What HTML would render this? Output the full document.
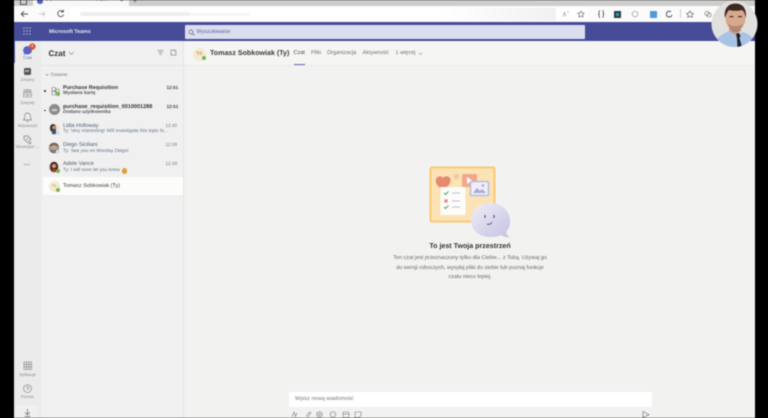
<!DOCTYPE html>
<html lang="pl">
<head>
<meta charset="utf-8">
<title>Microsoft Teams</title>
<style>
html,body{margin:0;padding:0;width:768px;height:418px;overflow:hidden;background:#000}
body{font-family:"Liberation Sans",sans-serif;position:relative;text-rendering:geometricPrecision}
#w{position:absolute;left:0;top:0;width:768px;height:418px;overflow:hidden;filter:blur(.5px)}
.a{position:absolute;white-space:nowrap}
.t{position:absolute;white-space:nowrap;line-height:1;margin-top:1.2px}
.rl{position:absolute;left:12px;width:31px;text-align:center;font-size:4.2px;color:#8a8a8a;line-height:1;margin-top:.7px}
.nm{font-size:5.5px;color:#3d3d3d}
.pv{font-size:4.8px;color:#6f6f6f}
.tm{font-size:4.6px;color:#777}
.tab{font-size:5.5px;color:#6e6e6e;top:50px}
</style>
</head>
<body>
<div id="w">
<!-- window -->
<div class="a" style="left:14px;top:0;width:741px;height:418px;background:#f2f2f0"></div>
<!-- tab bar -->
<div class="a" style="left:14px;top:0;width:741px;height:6px;background:#cdcdcb"></div>
<div class="a" style="left:33px;top:0;width:96px;height:6px;background:#f7f7f7"></div>
<div class="t" style="left:46px;top:-3px;font-size:4.8px;color:#555">(2) Tomasz Sobkowiak (Ty) | Mic...</div>
<div class="t" style="left:120px;top:-3px;font-size:6px;color:#444">×</div>
<div class="t" style="left:133px;top:-3px;font-size:7px;color:#555">+</div>
<div class="a" style="left:37px;top:-1px;width:6px;height:5px;border-radius:3px;background:#5a5fc0"></div>
<div class="a" style="left:20px;top:-1px;width:5px;height:4px;border:1px solid #555"></div>
<!-- address bar -->
<div class="a" style="left:14px;top:6px;width:741px;height:16px;background:#fbfbfb"></div>
<div class="a" style="left:70px;top:7.5px;width:518px;height:13px;background:#fff"></div>
<div class="a" style="left:440px;top:7.5px;width:116px;height:13px;background:linear-gradient(90deg,#fff,#f1f1f1)"></div>
<div class="a" style="left:80px;top:12px;width:110px;height:4px;background:#eeeeee;border-radius:2px"></div>
<div class="a" style="left:190px;top:12.5px;width:60px;height:3px;background:#f5f5f5;border-radius:2px"></div>
<svg class="a" style="left:14px;top:6px" width="741" height="16" viewBox="14 6 741 16" fill="none" stroke="#555" stroke-width=".9">
<path d="M21 14h7M21 14l3-2.6M21 14l3 2.6"/>
<path d="M39 14h6M45 14l-2.6-2.4M45 14l-2.6 2.4" stroke="#ccc"/>
<path d="M63 11.6a3 3 0 1 0 .6 3M63.3 9.8v2.2h-2.2"/>
<path d="M563 16.500l1.500-4 1.500 4M568 11v2" stroke="#888" stroke-width=".6"/>
<path d="M581 11l1.200 2 2 .3-1.500 1.500.4 2.200-2.100-1-2.100 1 .4-2.200-1.500-1.500 2-.3z" stroke="#777" stroke-width=".7"/>
<path d="M600 10.500c-1.200 0-.8 1.600-.9 2.600 0 .6-.5.9-.9.9.4 0 .9.3.9.9.1 1-.3 2.600.9 2.600M602.400 10.500c1.200 0 .8 1.600.9 2.600 0 .6.5.9.9.9-.4 0-.9.3-.9.9-.1 1 .3 2.600-.9 2.600" stroke="#333" stroke-width=".7"/>
<circle cx="635" cy="14" r="2.800" stroke="#999" stroke-width=".7"/>
<path d="M671 11.800a2.900 2.900 0 1 0 1 3.200" stroke="#555" stroke-width="1"/>
<path d="M690 11l1.200 2.100 2.200.4-1.600 1.600.4 2.200-2.200-1-2.200 1 .4-2.200-1.600-1.600 2.200-.4z" stroke="#666" stroke-width=".7"/>
<circle cx="707" cy="13.500" r="2.200" stroke="#777" stroke-width=".7"/><circle cx="709" cy="15" r="2.200" stroke="#777" stroke-width=".7"/>
</svg>
<div class="a" style="left:614px;top:11px;width:7px;height:7px;background:#263f4c"></div>
<div class="a" style="left:616px;top:13px;width:3px;height:3px;background:#3a93b5"></div>
<div class="a" style="left:650px;top:11px;width:7px;height:7px;background:#4d9bd6"></div>
<div class="a" style="left:680px;top:9px;width:.7px;height:9px;background:#ccc"></div>
<!-- teams header -->
<div class="a" style="left:14px;top:22px;width:741px;height:19px;background:#464c97"></div>
<svg class="a" style="left:23px;top:27px" width="9" height="9" fill="#aeb1d8"><circle cx="1" cy="1" r=".8"/><circle cx="4" cy="1" r=".8"/><circle cx="7" cy="1" r=".8"/><circle cx="1" cy="4" r=".8"/><circle cx="4" cy="4" r=".8"/><circle cx="7" cy="4" r=".8"/><circle cx="1" cy="7" r=".8"/><circle cx="4" cy="7" r=".8"/><circle cx="7" cy="7" r=".8"/></svg>
<div class="t" style="left:49px;top:28.800px;font-size:5.300px;font-weight:bold;color:#e6e7f4">Microsoft Teams</div>
<div class="a" style="left:185px;top:25px;width:400px;height:13.500px;background:#dcdeef;border-radius:1px"></div>
<svg class="a" style="left:188px;top:28.500px" width="7" height="7" fill="none" stroke="#5a5f90" stroke-width=".7"><circle cx="3" cy="3" r="2"/><path d="M4.500 4.500l2 2"/></svg>
<div class="t" style="left:196.500px;top:28.800px;font-size:5.400px;color:#5c5f95">Wyszukiwanie</div>
<!-- rail -->
<div class="a" style="left:14px;top:41px;width:27px;height:377px;background:#ebebeb"></div>
<div class="a" style="left:14px;top:41px;width:1px;height:22px;background:#5b5fb5"></div>
<svg class="a" style="left:22px;top:43px" width="16" height="14"><path d="M5.500 2a4 4 0 0 1 0 8c-.8 0-1.500-.2-2-.5L1.600 10.600l.5-2A4 4 0 0 1 5.500 2z" fill="#5c62c4" transform="translate(0 1) scale(1.050)"/><circle cx="10.400" cy="3.500" r="3.200" fill="#d5523a"/></svg>
<div class="t" style="left:31.200px;top:43.600px;font-size:3.600px;color:#fff;font-weight:bold">2</div>
<div class="rl" style="top:55.500px;color:#6064b8">Czat</div>
<div class="a" style="left:23.500px;top:68px;width:7px;height:7px;background:#555;border-radius:1.500px"></div>
<div class="a" style="left:25px;top:70px;width:4px;height:1.500px;background:#aaa"></div>
<div class="rl" style="top:77.500px">Zmiany</div>
<svg class="a" style="left:21.500px;top:89px" width="11" height="10" fill="none" stroke="#8a8a8a" stroke-width=".6"><circle cx="3" cy="2" r="1.200"/><circle cx="5.500" cy="1.600" r="1.200"/><circle cx="8" cy="2" r="1.200"/><path d="M1.500 4h8v4h-8zM5.500 4v4M1.500 6h8"/></svg>
<div class="rl" style="top:100px">Zespoły</div>
<svg class="a" style="left:22px;top:112px" width="11" height="11" fill="none" stroke="#808080" stroke-width=".65"><path d="M5.500 1a3 3 0 0 1 3 3v2.600l1 1.400h-8l1-1.400V4a3 3 0 0 1 3-3zM4.400 9.400h2.200"/></svg>
<div class="rl" style="top:123px">Aktywność</div>
<svg class="a" style="left:22px;top:134px" width="11" height="11" fill="none" stroke="#777" stroke-width=".65"><path d="M2 2h4l3 3-2 2 2 2-1.500 1L4 7 2 5zM4.500 5.500l1.500-1.500"/></svg>
<div class="rl" style="top:144.500px">Developer ...</div>
<div class="t" style="left:23.500px;top:158.500px;font-size:7px;color:#777;font-weight:bold;letter-spacing:.2px">...</div>
<svg class="a" style="left:22.500px;top:361px" width="10" height="10" fill="none" stroke="#777" stroke-width=".6"><path d="M1 1h7.500v7.500H1zM3.500 1v7.500M6 1v7.500M1 3.500h7.500M1 6h7.500"/></svg>
<div class="rl" style="top:372.500px">Aplikacje</div>
<svg class="a" style="left:22px;top:383px" width="11" height="11" fill="none" stroke="#777" stroke-width=".6"><circle cx="5.500" cy="5.500" r="4"/><path d="M4.200 4.400a1.300 1.300 0 1 1 1.600 1.300l-.3.3v1"/></svg>
<div class="rl" style="top:394.500px">Pomoc</div>
<div class="a" style="left:16px;top:405px;width:22px;height:13px;background:#f0f0f0;border-radius:2px 2px 0 0"></div>
<svg class="a" style="left:23px;top:409px" width="9" height="9" fill="none" stroke="#666" stroke-width=".7"><path d="M4.500 0v5.500M2 3.400l2.500 2.400L7 3.400M1.500 7.500h6"/></svg>
<!-- chat list -->
<div class="a" style="left:41px;top:41px;width:142px;height:377px;background:#f0f0f0"></div>
<div class="a" style="left:41px;top:65px;width:142px;height:.6px;background:#e6e6e6"></div>
<div class="a" style="left:183px;top:41px;width:.6px;height:377px;background:#e4e4e4"></div>
<div class="t" style="left:48.500px;top:48.500px;font-size:8px;font-weight:bold;color:#333">Czat</div>
<svg class="a" style="left:68px;top:51px" width="7" height="5" fill="none" stroke="#888" stroke-width=".7"><path d="M1 1l2.500 2.500L6 1"/></svg>
<svg class="a" style="left:157px;top:49px" width="7" height="7" fill="none" stroke="#888" stroke-width=".7"><path d="M.5 1.500h6M1.500 3.500h4M2.500 5.500h2"/></svg>
<svg class="a" style="left:170px;top:49px" width="7" height="7" fill="none" stroke="#888" stroke-width=".7"><path d="M5 1H1v5h5V2.500M4 3l2.200-2.200"/></svg>
<svg class="a" style="left:45px;top:73px" width="4" height="4" fill="none" stroke="#888" stroke-width=".6"><path d="M.5 1l1.500 1.500L3.500 1"/></svg>
<div class="t" style="left:50.500px;top:72.200px;font-size:4.600px;color:#777">Ostatnie</div>

<div class="a" style="left:44px;top:90px;width:1.500px;height:1.500px;background:#333;border-radius:50%"></div>
<svg class="a" style="left:50.500px;top:86px" width="11" height="10" fill="none" stroke="#777" stroke-width=".6"><path d="M1 1.500h3.500V5H1zM1 5.500h3.500V9H1zM5 3h3v3H5z"/></svg>
<div class="a" style="left:56px;top:92px;width:4px;height:4px;background:#74b64d;border-radius:50%"></div>
<div class="t nm" style="left:63px;top:84.800px;font-size:5.400px;font-weight:bold;color:#333">Purchase Requisition</div>
<div class="t pv" style="left:63px;top:91px;font-weight:bold;color:#555">Wysłano kartę</div>
<div class="t tm" style="left:166.500px;top:85.200px;font-weight:bold;color:#444">12:51</div>

<div class="a" style="left:44px;top:109.500px;width:1.500px;height:1.500px;background:#333;border-radius:50%"></div>
<div class="a" style="left:49px;top:104px;width:11px;height:11px;background:#8d8d8d;border-radius:50%"></div>
<div class="a" style="left:52px;top:108.500px;width:5px;height:2px;background:#d0d0d0"></div>
<div class="t nm" style="left:63px;top:103.800px;font-weight:bold;color:#333">purchase_requisition_0010001288</div>
<div class="t pv" style="left:63px;top:110.200px;font-weight:bold;font-style:italic;color:#555">Dodano użytkownika</div>
<div class="t tm" style="left:166.500px;top:104.200px;font-weight:bold;color:#444">12:51</div>

<svg class="a" style="left:48px;top:123px" width="13" height="13"><defs><clipPath id="c1"><circle cx="6" cy="6" r="5.300"/></clipPath></defs><g clip-path="url(#c1)"><rect width="13" height="13" fill="#e6e2dc"/><ellipse cx="5" cy="5" rx="3" ry="4" fill="#3d3028"/><circle cx="6" cy="4.500" r="1.800" fill="#c9976f"/><rect x="4" y="7" width="4" height="5" fill="#34527c"/></g><circle cx="10" cy="10" r="2" fill="#d8d8d8" stroke="#f0f0f0" stroke-width=".5"/></svg>
<div class="t nm" style="left:63px;top:122.600px;color:#4b5b72">Lidia Holloway</div>
<div class="t pv" style="left:63px;top:129.200px;color:#66748a">Ty: Very interesting! Will investigate this topic fo...</div>
<div class="t tm" style="left:165.500px;top:123px">12:40</div>

<svg class="a" style="left:48px;top:142px" width="13" height="13"><defs><clipPath id="c2"><circle cx="6" cy="6" r="5.300"/></clipPath></defs><g clip-path="url(#c2)"><rect width="13" height="13" fill="#a3988b"/><rect y="0" width="13" height="4" fill="#70665c"/><circle cx="6" cy="5.500" r="2.500" fill="#caa382"/><rect x="2" y="8" width="8" height="5" fill="#6f7f8b"/></g><circle cx="10" cy="10" r="2" fill="#d8d8d8" stroke="#f0f0f0" stroke-width=".5"/></svg>
<div class="t nm" style="left:63px;top:142px;color:#4b5b72">Diego Siciliani</div>
<div class="t pv" style="left:63px;top:148.500px;color:#66748a">Ty: See you on Monday Diego!</div>
<div class="t tm" style="left:165.500px;top:142.200px">12:39</div>

<svg class="a" style="left:48px;top:161px" width="13" height="13"><defs><clipPath id="c3"><circle cx="6" cy="6" r="5.300"/></clipPath></defs><g clip-path="url(#c3)"><rect width="13" height="13" fill="#d9c8b8"/><ellipse cx="6" cy="6" rx="4" ry="5.500" fill="#4b2a20"/><circle cx="6" cy="5" r="2" fill="#cf9c7e"/><rect x="4.500" y="8" width="3" height="4" fill="#b03d2e"/></g><circle cx="10" cy="10" r="2" fill="#74b64d"/></svg>
<div class="t nm" style="left:63px;top:161px;color:#4b5b72">Adele Vance</div>
<div class="t pv" style="left:63px;top:167.600px;color:#66748a">Ty: I will soon let you know</div>
<div class="a" style="left:121.500px;top:168px;width:5.500px;height:5.500px;background:#dda12e;border-radius:50%"></div>
<div class="t tm" style="left:165.500px;top:161.200px">12:39</div>

<div class="a" style="left:43px;top:177px;width:140px;height:18px;background:#fcfcfb"></div>
<div class="a" style="left:49px;top:180.500px;width:11px;height:11px;background:#f5e9d2;border-radius:50%"></div>
<div class="t" style="left:51.500px;top:183.800px;font-size:3.600px;color:#a08a62">TS</div>
<div class="a" style="left:56px;top:188px;width:4px;height:4px;background:#74b64d;border-radius:50%"></div>
<div class="t" style="left:63px;top:182.800px;font-size:5.400px;color:#444">Tomasz Sobkowiak (Ty)</div>

<!-- main header -->
<div class="a" style="left:184px;top:41px;width:571px;height:24px;background:#f5f5f4"></div>
<div class="a" style="left:184px;top:65px;width:571px;height:.6px;background:#e9e9e7"></div>
<div class="a" style="left:193px;top:47.500px;width:13px;height:13px;background:#f6e9d0;border-radius:50%"></div>
<div class="t" style="left:196.300px;top:50.700px;font-size:4.600px;color:#8f7a52">TS</div>
<div class="a" style="left:201.500px;top:55.500px;width:4px;height:4px;background:#74b64d;border-radius:50%"></div>
<div class="t" style="left:210px;top:48.800px;font-size:7.100px;font-weight:bold;color:#3a3a3a">Tomasz Sobkowiak (Ty)</div>
<div class="t tab" style="left:293.500px;color:#444">Czat</div>
<div class="a" style="left:293.500px;top:64px;width:11px;height:1.200px;background:#6468b8"></div>
<div class="t tab" style="left:311px">Pliki</div>
<div class="t tab" style="left:327px">Organizacja</div>
<div class="t tab" style="left:362.500px">Aktywność</div>
<div class="t tab" style="left:395.500px">1 więcej</div>
<svg class="a" style="left:418px;top:52px" width="5" height="4" fill="none" stroke="#999" stroke-width=".6"><path d="M.8 1l1.700 1.600L4.200 1"/></svg>

<!-- illustration -->
<svg class="a" style="left:425px;top:160px" width="90" height="80" viewBox="0 0 90 80">
<defs><linearGradient id="bub" x1="0" y1="0" x2="1" y2="1"><stop offset="0" stop-color="#f0eef7"/><stop offset="1" stop-color="#c4c2e2"/></linearGradient></defs>
<rect x="5.500" y="7.500" width="64" height="54" rx="1.500" fill="#fbe3b6" stroke="#fcc873" stroke-width="2"/>
<path d="M18 30C12 26 10 23 11 19c1-3 5-4 7-1 2-3 7-2 7.500 1.500C26 24 22 27 18 30z" fill="#e58a6f"/>
<rect x="29" y="14" width="5" height="5" rx="1" fill="#f6c5a8"/>
<rect x="37" y="14" width="15" height="13" rx="1.500" fill="#f0a78c"/>
<path d="M42 17l5 3.500-5 3.500z" fill="#fff"/>
<rect x="15.500" y="27" width="25" height="28" fill="#fdfcf8"/>
<path d="M19 33l1.500 1.500 3-3M19 47l1.500 1.500 3-3" stroke="#5aa36a" fill="none" stroke-width="1.100"/>
<path d="M19.500 39.500l3 3M22.500 39.500l-3 3" stroke="#d76a5d" stroke-width="1.100"/>
<path d="M27 33h8M27 41h8M27 47h8" stroke="#c6cbe4" stroke-width="1.300"/>
<rect x="45.500" y="21.500" width="18" height="14" rx="1" fill="#efeef8" stroke="#bcbcdc" stroke-width="1.500"/>
<path d="M48 33l4-5 3 3 2-2 4 4z" fill="#a9a9d2"/>
<circle cx="58" cy="25.500" r="1.300" fill="#a9a9d2"/>
<path d="M65 43c10 0 20 7 20 18 0 5-1.500 8-4 11 .5 2 1.500 4 4 5-4 .5-7-.5-9-2-3 1.500-7 2-11 2-11 0-19-7-19-17s8-17 19-17z" fill="url(#bub)"/>
<path d="M60 55v3M69 55v3" stroke="#44425c" stroke-width="1"/>
<path d="M62 64c2 1 4 0 5-2" stroke="#44425c" fill="none" stroke-width=".8"/>
</svg>
<div class="t" style="left:370px;width:200px;text-align:center;top:241.500px;font-size:7.100px;font-weight:bold;color:#333">To jest Twoja przestrzeń</div>
<div class="t" style="left:370px;width:200px;text-align:center;top:255px;font-size:5.450px;color:#666">Ten czat jest przeznaczony tylko dla Ciebie... z Tobą. Używaj go</div>
<div class="t" style="left:370px;width:200px;text-align:center;top:264.500px;font-size:5.450px;color:#666">do wersji roboczych, wysyłaj pliki do siebie lub poznaj funkcje</div>
<div class="t" style="left:370px;width:200px;text-align:center;top:274px;font-size:5.450px;color:#666">czatu nieco lepiej.</div>

<!-- composer -->
<div class="a" style="left:289px;top:391.500px;width:363px;height:15.500px;background:#fff;border-radius:1px"></div>
<div class="t" style="left:295px;top:396px;font-size:5.500px;color:#777">Wpisz nową wiadomość</div>
<svg class="a" style="left:290px;top:410px" width="375" height="8" viewBox="290 410 375 8" fill="none" stroke="#777" stroke-width=".6">
<path d="M292 417l2-5 2 5M297 413l-2 4"/>
<path d="M306 416.500l3-4c1-1 2.500 0 1.500 1l-3 4"/>
<circle cx="319.500" cy="414.500" r="2.800"/><circle cx="319.500" cy="414.500" r="1"/>
<circle cx="333" cy="414.500" r="2.800"/><path d="M332 414v.5M334 414v.5"/>
<rect x="343" y="412" width="6" height="5.500" rx=".8"/><path d="M343 414h6"/>
<path d="M355 412h6v3.500l-2.200 2.200H355z"/>
<path d="M643 411.500l6 3.200-6 3z" stroke-width=".7"/>
</svg>

<!-- black edges -->
<div class="a" style="left:0;top:0;width:13.500px;height:418px;background:#000"></div>
<div class="a" style="left:755px;top:0;width:13px;height:418px;background:#000"></div>

<!-- profile photo -->
<svg class="a" style="left:711px;top:0" width="48" height="48" viewBox="0 0 48 48">
<defs><clipPath id="pc"><circle cx="23.500" cy="24" r="23"/></clipPath></defs>
<g clip-path="url(#pc)">
<rect width="48" height="48" fill="#e2e0de"/>
<path d="M2 48c1-10 10-14 16-17l7 4 7-3c6 2 12 6 14 16z" fill="#a9c3e6"/>
<path d="M18 22h12v9l-5 4-7-4z" fill="#c99a80"/>
<ellipse cx="24.500" cy="18" rx="10" ry="12.500" fill="#d8a88e"/>
<path d="M14 18c-1.500-9 3-14.500 10.500-14.500S36 9 34.800 18c-.8-4-1.800-7-3.800-8-4 1-9 1-13 0-2 2-3 5-4 8z" fill="#3a2a22"/>
<path d="M17 23c1 6 4.500 9 7.500 9s6.500-3 7.500-9c-1 2-3 3-7.500 3s-6.500-1-7.500-3z" fill="#8f6f5c" opacity=".55"/>
<rect x="18.500" y="16" width="4" height="1.200" fill="#4a352a"/>
<rect x="27" y="16" width="4" height="1.200" fill="#4a352a"/>
<path d="M25 34l3-1 1.500 3-1 2 3 11h-5l-.5-11z" fill="#1d2226"/>
</g>
</svg>
</div>
</body>
</html>
